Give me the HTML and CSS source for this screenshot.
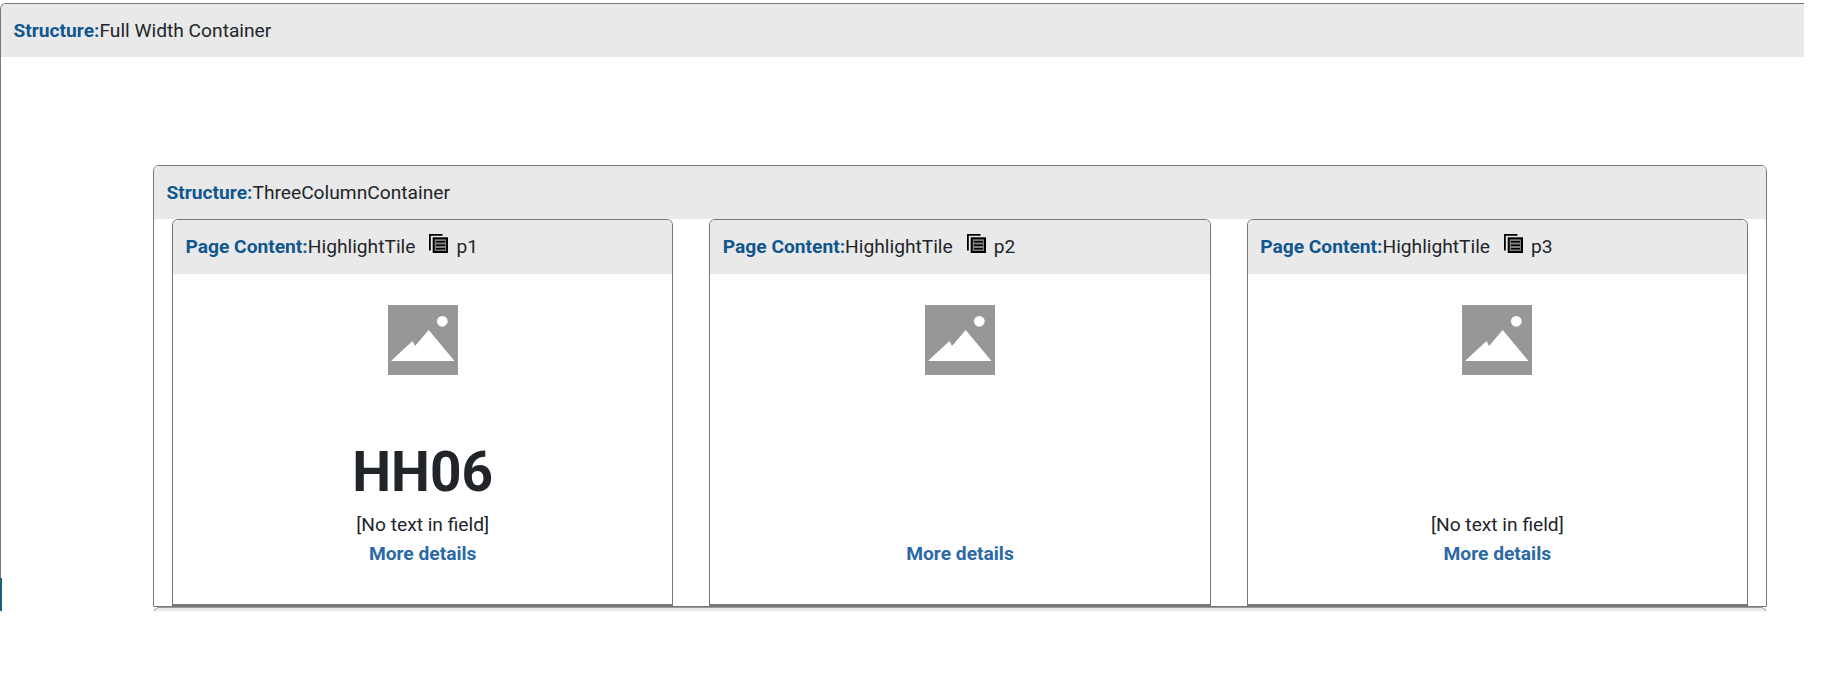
FILE: index.html
```html
<!DOCTYPE html>
<html lang="en">
<head>
<meta charset="utf-8">
<title>Structure</title>
<link rel="stylesheet" href="styles.css">
</head>
<body>
<div class="page">
  <section class="outer">
    <header class="bar"><span><b>Structure:</b>Full Width Container</span></header>
    <div class="outer-body">
      <section class="box">
        <header class="bar"><span><b>Structure:</b>ThreeColumnContainer</span></header>
        <div class="cols">
          <article class="card">
            <header class="bar"><span><b>Page Content:</b>HighlightTile</span><svg class="copy" viewBox="0 0 19 19"><path d="M0 0h13.500v1.800H1.800v14.700H0z"/><rect x="3.700" y="3.300" width="15.300" height="15.700"/><rect x="5.700" y="5.300" width="11.300" height="11.700" fill="#808080"/><path d="M7 7h9v1.500H7zM7 10.500h9V12H7zM7 14h9v1.500H7z"/></svg><span>p1</span></header>
            <div class="tile">
              <svg class="pic" viewBox="0 0 70 70"><rect width="70" height="70" fill="#979797"/><circle cx="54.300" cy="16.300" r="5.400" fill="#fff"/><path d="M3 56 L24.500 36 L27 41 L40.700 25 L66.500 56z" fill="#fff"/></svg>
              <h1 class="code">HH06</h1>
              <p class="line">[No text in field]</p>
              <a class="more">More details</a>
            </div>
          </article>
          <article class="card">
            <header class="bar"><span><b>Page Content:</b>HighlightTile</span><svg class="copy" viewBox="0 0 19 19"><path d="M0 0h13.500v1.800H1.800v14.700H0z"/><rect x="3.700" y="3.300" width="15.300" height="15.700"/><rect x="5.700" y="5.300" width="11.300" height="11.700" fill="#808080"/><path d="M7 7h9v1.500H7zM7 10.500h9V12H7zM7 14h9v1.500H7z"/></svg><span>p2</span></header>
            <div class="tile">
              <svg class="pic" viewBox="0 0 70 70"><rect width="70" height="70" fill="#979797"/><circle cx="54.300" cy="16.300" r="5.400" fill="#fff"/><path d="M3 56 L24.500 36 L27 41 L40.700 25 L66.500 56z" fill="#fff"/></svg>
              <h1 class="code"></h1>
              <p class="line"></p>
              <a class="more">More details</a>
            </div>
          </article>
          <article class="card">
            <header class="bar"><span><b>Page Content:</b>HighlightTile</span><svg class="copy" viewBox="0 0 19 19"><path d="M0 0h13.500v1.800H1.800v14.700H0z"/><rect x="3.700" y="3.300" width="15.300" height="15.700"/><rect x="5.700" y="5.300" width="11.300" height="11.700" fill="#808080"/><path d="M7 7h9v1.500H7zM7 10.500h9V12H7zM7 14h9v1.500H7z"/></svg><span>p3</span></header>
            <div class="tile">
              <svg class="pic" viewBox="0 0 70 70"><rect width="70" height="70" fill="#979797"/><circle cx="54.300" cy="16.300" r="5.400" fill="#fff"/><path d="M3 56 L24.500 36 L27 41 L40.700 25 L66.500 56z" fill="#fff"/></svg>
              <h1 class="code"></h1>
              <p class="line">[No text in field]</p>
              <a class="more">More details</a>
            </div>
          </article>
        </div>
      </section>
      <section class="box box-next"></section>
    </div>
  </section>
</div>
</body>
</html>
```

FILE: styles.css
```css
* { box-sizing: border-box; }
html, body { margin: 0; padding: 0; background: #fff; }
body { font-family: Roboto, "Liberation Sans", sans-serif; font-size: 19.2px; color: #212529; overflow: hidden; }
.page { height: 611px; overflow: hidden; padding-top: 3px; }
.outer { border: 1px solid #777; border-right: 0; border-radius: 6px 0 0 6px; width: 1804px; height: 640px; position: relative; }
.outer::after { content: ""; position: absolute; left: -1px; top: 574px; width: 2px; height: 40px; background: #1a5f7a; }
.bar { background: #e9e9e9; height: 53px; padding: 0 13px 0 12.500px; display: flex; align-items: center; white-space: nowrap; line-height: 1; }
.outer > .bar { border-radius: 5px 0 0 0; }
.bar b { color: #10568f; font-weight: 700; }
.outer-body { padding: 108px 37px 0 152px; }
.box { border: 1px solid #777; border-radius: 6px 6px 0 0; height: 442px; }
.box > .bar { height: 53px; border-radius: 5px 5px 0 0; }
.box-next { background: #e9e9e9; height: 60px; border-color: #999; }
.cols { display: grid; grid-template-columns: repeat(3, 1fr); gap: 36px; padding: 0 18px; }
.card { border: 1px solid #777; border-bottom-width: 2px; border-radius: 6px 6px 0 0; height: 387px; background: #fff; }
.card .bar { height: 54px; border-radius: 5px 5px 0 0; }
.copy { width: 19px; height: 19px; margin: -7px 8px 0 14px; flex: none; }
.tile { display: flex; flex-direction: column; align-items: center; padding-top: 31px; }
.pic { width: 70px; height: 70px; display: block; }
.code { margin: 0; height: 135px; padding-top: 64px; font-size: 55px; line-height: 66px; font-weight: 700; text-align: center; }
.line { margin: 0; height: 29px; line-height: 29px; text-align: center; }
.more { color: #2a68a6; font-weight: 700; line-height: 29px; height: 29px; }
```
